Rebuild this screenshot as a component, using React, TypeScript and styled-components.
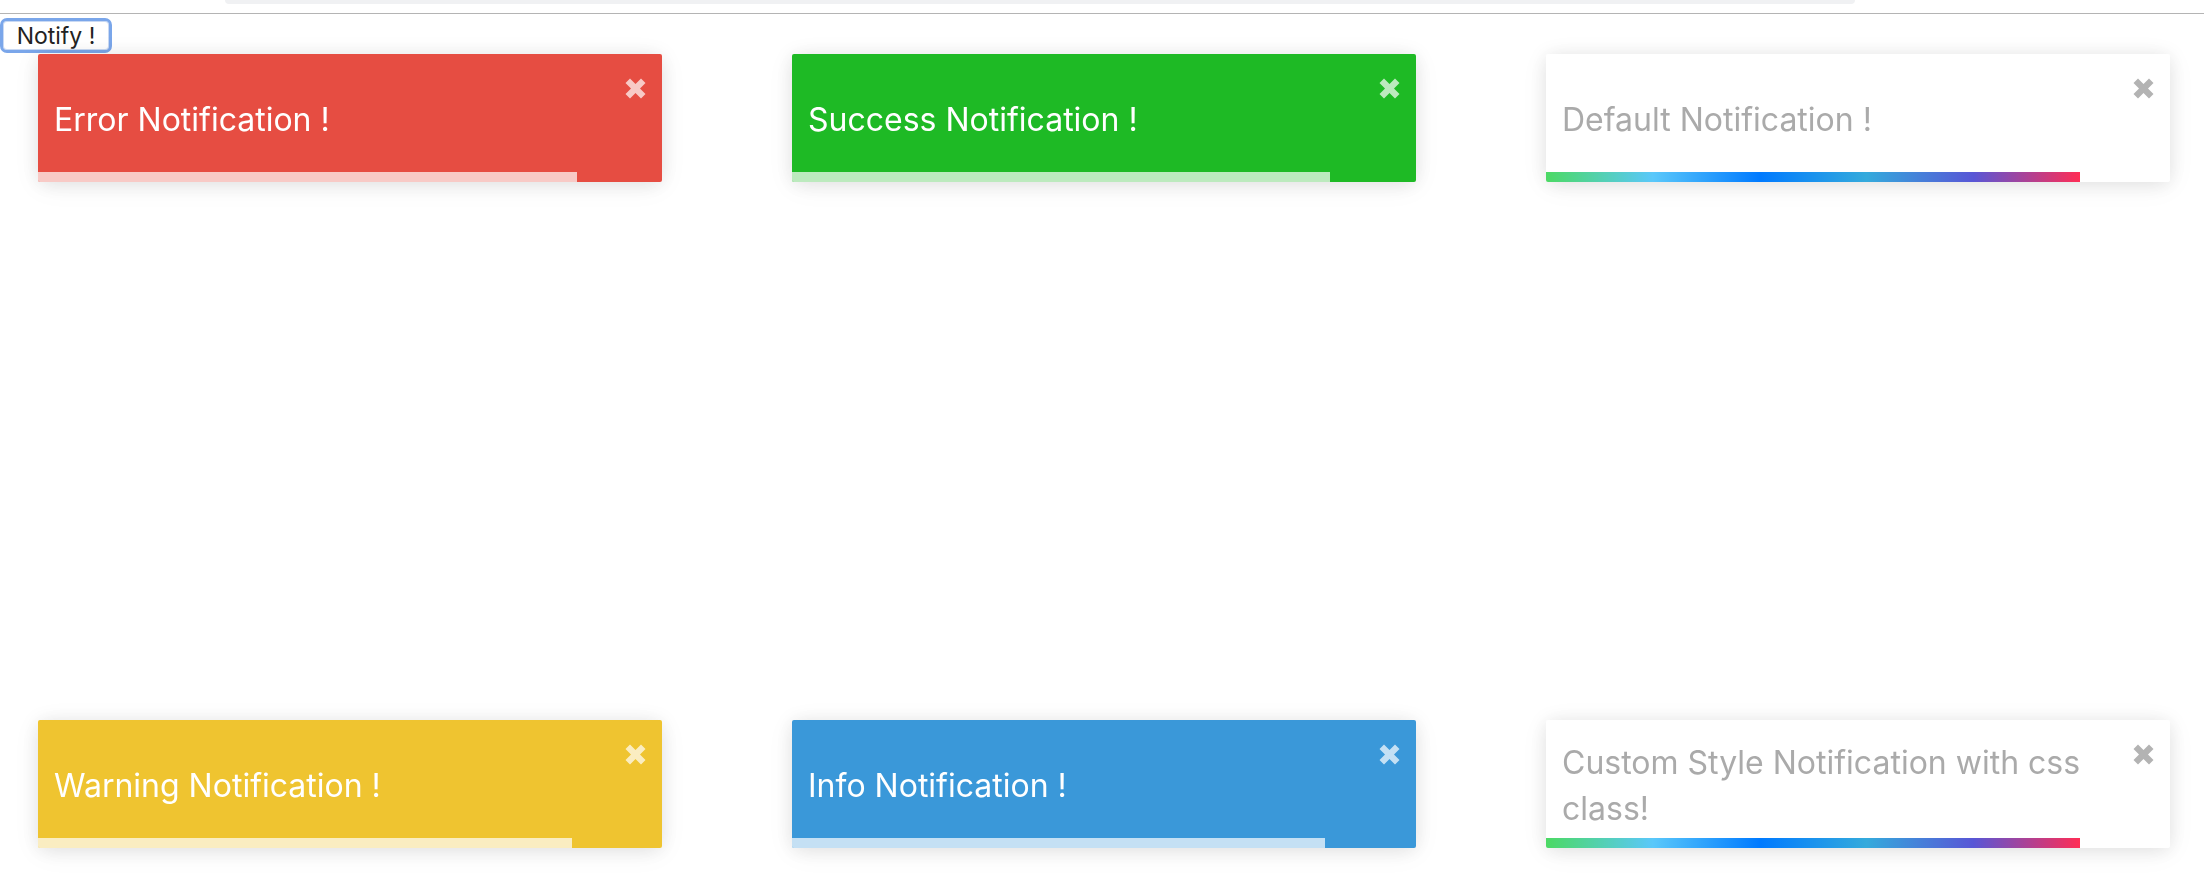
import React from "react";
import styled, { createGlobalStyle, css } from "styled-components";

const GlobalStyle = createGlobalStyle`
  html, body { margin: 0; padding: 0; background: #ffffff; }
  body { font-family: Inter, "Noto Sans", sans-serif; }
`;

type Kind = "error" | "success" | "default" | "warning" | "info";

const palette: Record<Kind, { bg: string; fg: string; close: string; bar: string }> = {
  error: { bg: "#e64d42", fg: "#ffffff", close: "rgba(255,255,255,0.7)", bar: "rgba(255,255,255,0.7)" },
  success: { bg: "#1eba25", fg: "#ffffff", close: "rgba(255,255,255,0.7)", bar: "rgba(255,255,255,0.7)" },
  warning: { bg: "#efc430", fg: "#ffffff", close: "rgba(255,255,255,0.7)", bar: "rgba(255,255,255,0.7)" },
  info: { bg: "#3a98d9", fg: "#ffffff", close: "rgba(255,255,255,0.7)", bar: "rgba(255,255,255,0.7)" },
  default: {
    bg: "#ffffff",
    fg: "#aaaaaa",
    close: "#b3b3b3",
    bar: "linear-gradient(to right, #4cd964, #5ac8fa, #007aff, #34aadc, #5856d6, #ff2d55)",
  },
};

const Page = styled.div`
  display: flex;
  flex-direction: column;
  align-items: flex-start;
`;

const TopStrip = styled.div`
  width: 100%;
  height: 13px;
  border-bottom: 1px solid #b4b4b4;
  display: flex;
`;

const TopPill = styled.div`
  margin-left: 225px;
  width: 1630px;
  height: 4px;
  background: #f0f1f3;
  border-radius: 0 0 14px 14px;
`;

const NotifyButton = styled.button`
  margin-top: 4px;
  width: 112px;
  height: 35px;
  box-sizing: border-box;
  border: 3px solid #7aa6ea;
  border-radius: 7px;
  background: #ffffff;
  box-shadow: inset 0 0 0 1px #c9d9f3;
  font-family: Inter, "Noto Sans", sans-serif;
  font-size: 23px;
  color: #222222;
  padding: 0;
  cursor: pointer;
`;

type Corner = "tl" | "tc" | "tr" | "bl" | "bc" | "br";

const positions: Record<Corner, ReturnType<typeof css>> = {
  tl: css`top: 54px; left: 38px;`,
  tc: css`top: 54px; left: 792px;`,
  tr: css`top: 54px; right: 34px;`,
  bl: css`bottom: 34px; left: 38px;`,
  bc: css`bottom: 34px; left: 792px;`,
  br: css`bottom: 34px; right: 34px;`,
};

const ToastContainer = styled.div<{ $corner: Corner }>`
  position: fixed;
  width: 624px;
  display: flex;
  flex-direction: column;
  ${(p) => positions[p.$corner]}
`;

const Toast = styled.div<{ $kind: Kind }>`
  position: relative;
  min-height: 128px;
  box-sizing: border-box;
  padding: 0 16px 0 16px;
  display: flex;
  justify-content: space-between;
  border-radius: 2px;
  overflow: hidden;
  background: ${(p) => palette[p.$kind].bg};
  box-shadow: 0 2px 20px 0 rgba(0, 0, 0, 0.1), 0 4px 30px 0 rgba(0, 0, 0, 0.05);
`;

const ToastBody = styled.div<{ $kind: Kind }>`
  flex: 1;
  margin: auto 0;
  padding-top: 4px;
  font-family: Inter, "Noto Sans", sans-serif;
  font-size: 32px;
  line-height: 46px;
  color: ${(p) => palette[p.$kind].fg};
`;

const CloseButton = styled.div<{ $kind: Kind }>`
  align-self: flex-start;
  margin-top: 24px;
  margin-left: 36px;
  width: 21px;
  height: 21px;
  display: flex;
  color: ${(p) => palette[p.$kind].close};
`;

const ProgressBar = styled.div<{ $kind: Kind }>`
  position: absolute;
  left: 0;
  bottom: 0;
  height: 10px;
  background: ${(p) => palette[p.$kind].bar};
`;

const CloseIcon = () => (
  <svg width="21" height="21" viewBox="0 0 21 21">
    <path
      d="M5 0.5 L10.5 6 L16 0.5 L20.5 5 L15 10.5 L20.5 16 L16 20.5 L10.5 15 L5 20.5 L0.5 16 L6 10.5 L0.5 5 Z"
      fill="currentColor"
    />
  </svg>
);

type ToastData = { corner: Corner; kind: Kind; text: string; progress: number };

const toasts: ToastData[] = [
  { corner: "tl", kind: "error", text: "Error Notification !", progress: 539 },
  { corner: "tc", kind: "success", text: "Success Notification !", progress: 538 },
  { corner: "tr", kind: "default", text: "Default Notification !", progress: 534 },
  { corner: "bl", kind: "warning", text: "Warning Notification !", progress: 534 },
  { corner: "bc", kind: "info", text: "Info Notification !", progress: 533 },
  { corner: "br", kind: "default", text: "Custom Style Notification with css class!", progress: 534 },
];

export default function App() {
  return (
    <>
      <GlobalStyle />
      <Page>
        <TopStrip>
          <TopPill />
        </TopStrip>
        <NotifyButton>Notify !</NotifyButton>
      </Page>
      {toasts.map((t) => (
        <ToastContainer key={t.corner} $corner={t.corner}>
          <Toast $kind={t.kind}>
            <ToastBody $kind={t.kind}>{t.text}</ToastBody>
            <CloseButton $kind={t.kind}>
              <CloseIcon />
            </CloseButton>
            <ProgressBar $kind={t.kind} style={{ width: `${t.progress}px` }} />
          </Toast>
        </ToastContainer>
      ))}
    </>
  );
}
